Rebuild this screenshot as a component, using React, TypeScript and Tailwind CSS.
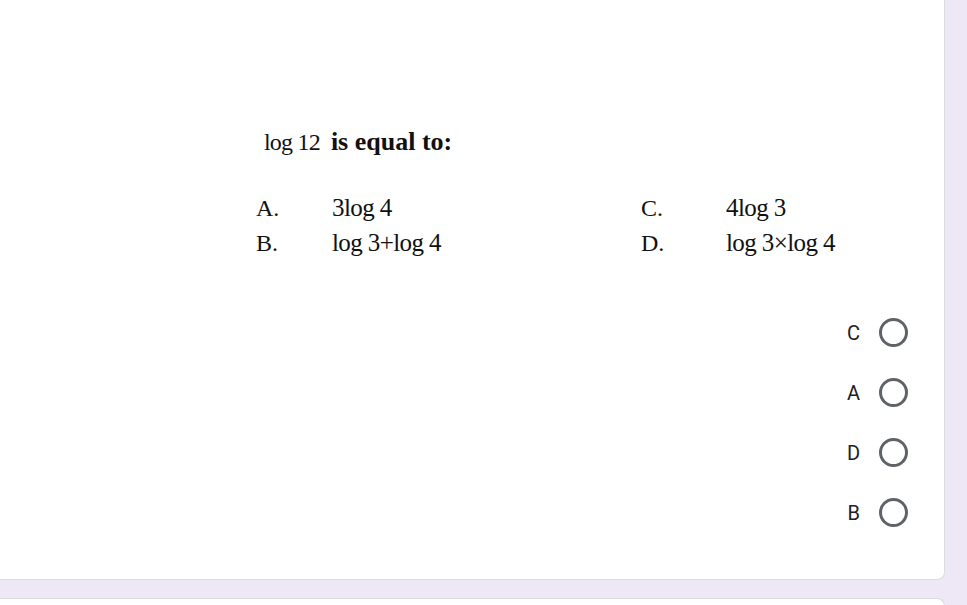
const serif = { fontFamily: '"Liberation Serif", "Times New Roman", serif' };

type Opt = { key: string; expr: string };

const left: Opt[] = [
  { key: "A.", expr: "3log 4" },
  { key: "B.", expr: "log 3+log 4" },
];
const right: Opt[] = [
  { key: "C.", expr: "4log 3" },
  { key: "D.", expr: "log 3×log 4" },
];

const choices = ["C", "A", "D", "B"];

function OptionCol({ items, gap }: { items: Opt[]; gap: string }) {
  return (
    <div className="flex flex-col gap-[10px]">
      {items.map((o) => (
        <div key={o.key} className="flex h-[25px] items-center text-[24px] leading-none text-[#111]">
          <span className={gap}>{o.key}</span>
          <span className="text-[25px] tracking-[-0.6px]">{o.expr}</span>
        </div>
      ))}
    </div>
  );
}

export default function App() {
  return (
    <div className="flex h-[605px] w-[967px] flex-col overflow-hidden bg-[#ede7f6]">
      <div className="relative h-[580px] w-[945px] shrink-0 rounded-br-[8px] border-r border-b border-[#dadce0] bg-white">
        <div className="pl-[264px] pt-[129px]" style={serif}>
          <div className="flex items-baseline leading-none text-[#111]">
            <span className="text-[24px] tracking-[-0.8px]">log 12</span>
            <span className="ml-[11px] text-[26px] font-bold">is equal to:</span>
          </div>
        </div>
        <div className="mt-[40px] flex pl-[256px]" style={serif}>
          <div className="w-[385px]">
            <OptionCol items={left} gap="w-[76px]" />
          </div>
          <OptionCol items={right} gap="w-[85px]" />
        </div>

        <div className="mt-[63px] flex flex-col items-end gap-[31px] pr-[36px]" style={{ fontFamily: 'Roboto, "Liberation Sans", sans-serif' }}>
          {choices.map((c) => (
            <label key={c} className="flex items-center gap-[19px]">
              <span className="text-[20px] leading-none text-[#202124]">{c}</span>
              <span className="h-[29px] w-[29px] rounded-full border-[3px] border-[#5f6368]" />
            </label>
          ))}
        </div>
      </div>
      <div className="mt-[18px] h-[40px] w-[945px] shrink-0 rounded-tr-[8px] border-t border-r border-[#dadce0] bg-white" />
    </div>
  );
}
